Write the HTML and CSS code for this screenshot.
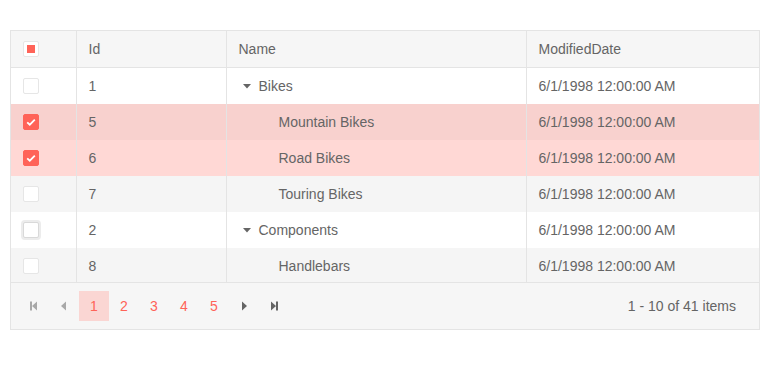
FILE: index.html
```html
<!DOCTYPE html>
<html>
    <head>
        <meta charset=utf-8>
        <title>TreeList</title>
        <link rel="stylesheet" href="styles.css">
    </head>
    <body>
        <div class="treelist">
            <table class="grid head">
                <colgroup><col class="c-check"><col class="c-id"><col class="c-name"><col></colgroup>
                <tr>
                    <th><span class="check partial"><span></span></span></th>
                    <th>Id</th>
                    <th>Name</th>
                    <th>ModifiedDate</th>
                </tr>
            </table>

            <div class="content">
                <table class="grid body">
                    <colgroup><col class="c-check"><col class="c-id"><col class="c-name"><col></colgroup>
                    <tr>
                        <td><span class="check"></span></td>
                        <td>1</td>
                        <td><span class="toggle"><svg width="16" height="16" viewBox="0 0 16 16"><path d="M4 6h8l-4 4.5z"/></svg></span>Bikes</td>
                        <td>6/1/1998 12:00:00 AM</td>
                    </tr>
                    <tr class="selected">
                        <td><span class="check on"><svg width="16" height="16" viewBox="0 0 16 16"><path d="M4.2 8.3l2.6 2.4 5-5"/></svg></span></td>
                        <td>5</td>
                        <td class="child">Mountain Bikes</td>
                        <td>6/1/1998 12:00:00 AM</td>
                    </tr>
                    <tr class="alt selected">
                        <td><span class="check on"><svg width="16" height="16" viewBox="0 0 16 16"><path d="M4.2 8.3l2.6 2.4 5-5"/></svg></span></td>
                        <td>6</td>
                        <td class="child">Road Bikes</td>
                        <td>6/1/1998 12:00:00 AM</td>
                    </tr>
                    <tr class="alt">
                        <td><span class="check"></span></td>
                        <td>7</td>
                        <td class="child">Touring Bikes</td>
                        <td>6/1/1998 12:00:00 AM</td>
                    </tr>
                    <tr>
                        <td><span class="check focus"></span></td>
                        <td>2</td>
                        <td><span class="toggle"><svg width="16" height="16" viewBox="0 0 16 16"><path d="M4 6h8l-4 4.5z"/></svg></span>Components</td>
                        <td>6/1/1998 12:00:00 AM</td>
                    </tr>
                    <tr class="alt">
                        <td><span class="check"></span></td>
                        <td>8</td>
                        <td class="child">Handlebars</td>
                        <td>6/1/1998 12:00:00 AM</td>
                    </tr>
                </table>
            </div>

            <div class="pager">
                <span class="nav off"><svg width="16" height="16" viewBox="0 0 16 16"><path d="M4 3.5h2v9H4zM6 8l5-4.5v9z"/></svg></span>
                <span class="nav off"><svg width="16" height="16" viewBox="0 0 16 16"><path d="M5 8l5-4.5v9z"/></svg></span>
                <span class="page current">1</span>
                <span class="page">2</span>
                <span class="page">3</span>
                <span class="page">4</span>
                <span class="page">5</span>
                <span class="nav"><svg width="16" height="16" viewBox="0 0 16 16"><path d="M11 8L6 3.5v9z"/></svg></span>
                <span class="nav"><svg width="16" height="16" viewBox="0 0 16 16"><path d="M10 3.5h2v9h-2zM10 8L5 3.5v9z"/></svg></span>
                <span class="info">1 - 10 of 41 items</span>
            </div>
        </div>
    </body>
</html>
```

FILE: styles.css
```css
html, body {
    margin: 0;
    padding: 0;
    background: #fff;
}

body {
    padding: 30px 10px;
    font: 14px/20px "Liberation Sans", Arial, sans-serif;
    color: #656565;
}

.treelist {
    width: 748px;
    border: 1px solid #e4e4e4;
    background: #fff;
}

.grid {
    width: 100%;
    border-collapse: collapse;
    table-layout: fixed;
}

.c-check {
    width: 65px;
}

.c-id {
    width: 150px;
}

.c-name {
    width: 300px;
}

.grid th, .grid td {
    height: 36px;
    padding: 1px 12px 0;
    text-align: left;
    font-weight: normal;
    white-space: nowrap;
    vertical-align: middle;
    border-left: 1px solid #e4e4e4;
    box-sizing: border-box;
}

.grid th:first-child, .grid td:first-child {
    border-left: 0;
    padding-top: 0;
}

.head {
    background: #f6f6f6;
    border-bottom: 1px solid #e4e4e4;
}

.content {
    height: 214px;
    overflow: hidden;
}

.body tr.alt {
    background: #f5f5f5;
}

.body tr.selected {
    background: #f8d1ce;
}

.body tr.alt.selected {
    background: #ffd8d5;
}

.check {
    display: block;
    width: 16px;
    height: 16px;
    box-sizing: border-box;
    border: 1px solid #e6e6e6;
    border-radius: 2px;
    background: #fff;
    position: relative;
}

.check.partial span {
    position: absolute;
    left: 3px;
    top: 3px;
    width: 8px;
    height: 8px;
    background: #ff6358;
}

.check.on {
    border-color: #ff6358;
    background: #ff6358;
}

.check.on svg {
    position: absolute;
    left: -1px;
    top: -1px;
    fill: none;
    stroke: #fff;
    stroke-width: 1.8;
}

.check.focus {
    border-color: #d9d9d9;
    box-shadow: 0 0 0 2px #ececec;
}

.toggle {
    display: inline-block;
    width: 16px;
    height: 16px;
    margin-right: 4px;
    vertical-align: -3px;
}

.toggle svg {
    fill: #656565;
    display: block;
}

.grid td.child {
    padding-left: 52px;
}

.pager {
    display: flex;
    align-items: center;
    padding: 8px;
    border-top: 1px solid #e4e4e4;
    background: #f6f6f6;
}

.nav, .page {
    width: 30px;
    height: 30px;
    display: flex;
    align-items: center;
    justify-content: center;
}

.nav svg {
    fill: #656565;
}

.nav.off svg {
    fill: #a8a8a8;
}

.page {
    color: #ff6358;
}

.page.current {
    background: #fad6d3;
}

.info {
    margin-left: auto;
    padding-right: 15px;
}
```
